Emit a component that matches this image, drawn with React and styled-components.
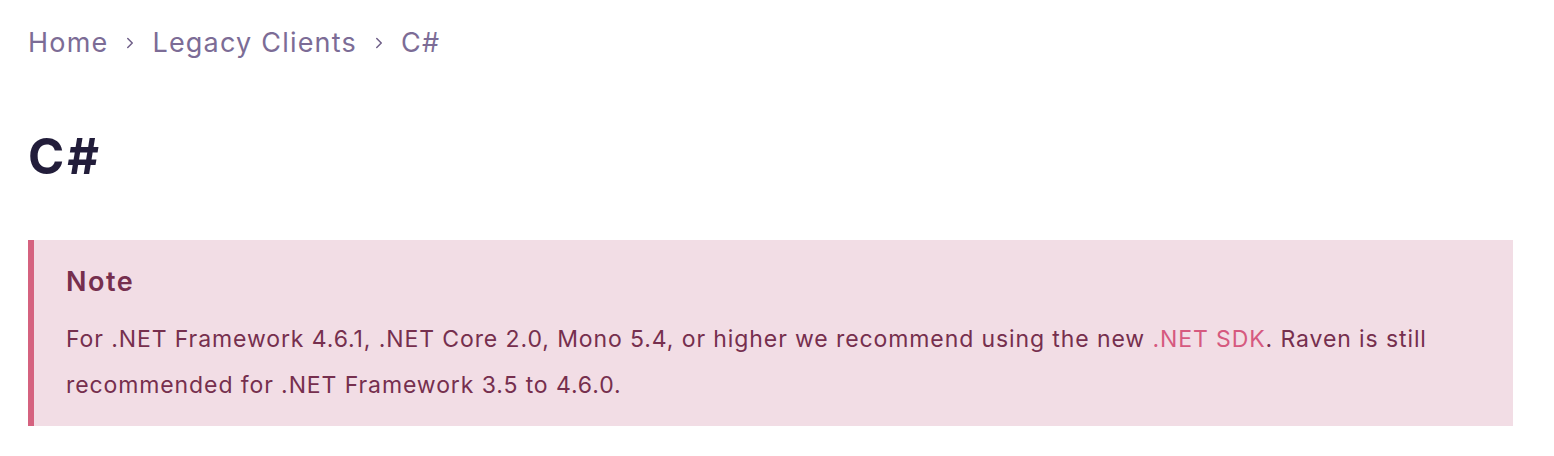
import React from 'react'
import styled, { createGlobalStyle } from 'styled-components'
import { ChevronRight } from 'lucide-react'

const GlobalStyle = createGlobalStyle`
  body {
    margin: 0;
    background: #fff;
    font-family: Inter, "Noto Sans", sans-serif;
  }
`

const Page = styled.div`
  padding: 26px 41px 0 28px;
`

const Crumbs = styled.nav`
  display: flex;
  align-items: center;
  gap: 13px;
  font-size: 27px;
  line-height: 34px;
  letter-spacing: 1.2px;
  color: #7c6c96;
`

const Sep = styled.span`
  display: flex;
  align-items: center;
  color: #6f5f88;
`

const Title = styled.h1`
  margin: 65px 0 0;
  font-size: 49px;
  line-height: 64px;
  font-weight: 700;
  letter-spacing: 3px;
  color: #221d3a;
`

const Note = styled.div`
  margin-top: 51px;
  background: #f2dde5;
  border-left: 6px solid #d5627f;
  padding: 24px 38px 18px 32px;
  color: #762f4e;
`

const NoteTitle = styled.div`
  font-size: 27px;
  font-weight: 600;
  line-height: 36px;
  letter-spacing: 1.5px;
  margin-bottom: 16px;
`

const NoteText = styled.p`
  margin: 0;
  font-size: 23px;
  line-height: 46px;
  letter-spacing: 0.9px;
`

const Link = styled.a`
  color: #d6597f;
  text-decoration: none;
`

export default function App() {
  return (
    <Page>
      <GlobalStyle />
      <Crumbs>
        <span>Home</span>
        <Sep><ChevronRight size={18} strokeWidth={2} /></Sep>
        <span>Legacy Clients</span>
        <Sep><ChevronRight size={18} strokeWidth={2} /></Sep>
        <span>C#</span>
      </Crumbs>
      <Title>C#</Title>
      <Note>
        <NoteTitle>Note</NoteTitle>
        <NoteText>
          For .NET Framework 4.6.1, .NET Core 2.0, Mono 5.4, or higher we recommend using the new{' '}
          <Link href="#">.NET SDK</Link>. Raven is still recommended for .NET Framework 3.5 to 4.6.0.
        </NoteText>
      </Note>
    </Page>
  )
}
